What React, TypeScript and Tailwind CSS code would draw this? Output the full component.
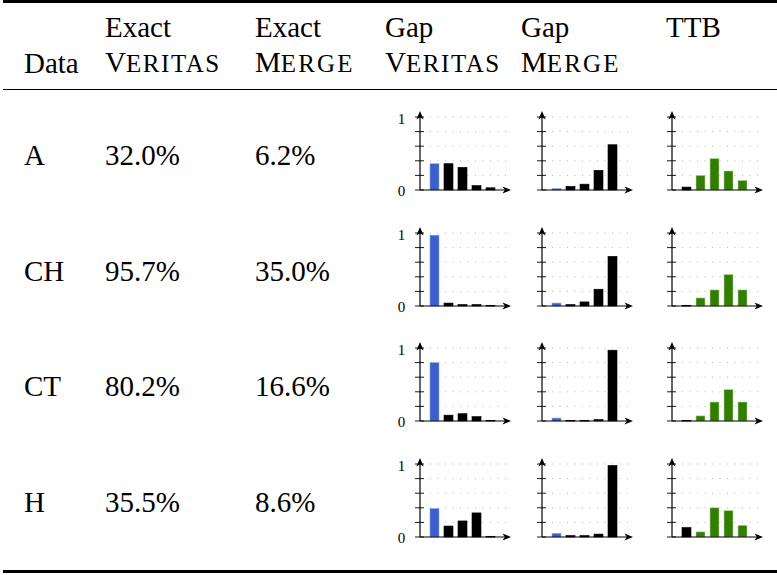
import React from 'react';

const BLUE = '#3a5fcd';
const GREEN = '#337d04';
const BLACK = '#000000';

interface Row {
  label: string;
  exactVeritas: string;
  exactMerge: string;
  gapVeritas: number[];
  gapMerge: number[];
  ttb: number[];
}

const rows: Row[] = [
  {
    label: 'A',
    exactVeritas: '32.0%',
    exactMerge: '6.2%',
    gapVeritas: [0.36, 0.36, 0.31, 0.06, 0.03],
    gapMerge: [0.02, 0.05, 0.08, 0.27, 0.62],
    ttb: [0.04, 0.2, 0.43, 0.26, 0.13],
  },
  {
    label: 'CH',
    exactVeritas: '95.7%',
    exactMerge: '35.0%',
    gapVeritas: [0.97, 0.04, 0.02, 0.02, 0.01],
    gapMerge: [0.04, 0.02, 0.056, 0.23, 0.68],
    ttb: [0.01, 0.11, 0.22, 0.43, 0.22],
  },
  {
    label: 'CT',
    exactVeritas: '80.2%',
    exactMerge: '16.6%',
    gapVeritas: [0.8, 0.08, 0.1, 0.06, 0.01],
    gapMerge: [0.04, 0.01, 0.01, 0.02, 0.97],
    ttb: [0.01, 0.07, 0.26, 0.43, 0.26],
  },
  {
    label: 'H',
    exactVeritas: '35.5%',
    exactMerge: '8.6%',
    gapVeritas: [0.39, 0.15, 0.22, 0.33, 0.01],
    gapMerge: [0.05, 0.02, 0.02, 0.04, 0.98],
    ttb: [0.13, 0.07, 0.4, 0.36, 0.16],
  },
];

const barEdge = (color: string) => (color === BLUE ? '#8fa6e8' : color === GREEN ? '#a9d98a' : BLACK);

// small bar plot with arrowed axes, dotted grid and optional 0/1 labels
function Chart({ values, colors, labels = false }: { values: number[]; colors: string[]; labels?: boolean }) {
  const ax = 6;
  const y0 = 83;
  const span = 73;
  const levels = [0.2, 0.4, 0.6, 0.8, 1];
  return (
    <svg
      width={labels ? 129 : 100}
      height={100}
      viewBox={labels ? '-29 0 129 100' : '0 0 100 100'}
      className="block"
    >
      {levels.map((l) => (
        <line
          key={`g${l}`}
          x1={ax + 10}
          x2={ax + 87}
          y1={y0 - l * span}
          y2={y0 - l * span}
          stroke="#b4b4b4"
          strokeWidth={1}
          strokeDasharray="1 6.5"
        />
      ))}
      {[0, ...levels].map((l) => (
        <line key={`t${l}`} x1={ax - 5} x2={ax + 4} y1={y0 - l * span} y2={y0 - l * span} stroke="#000" strokeWidth={0.9} />
      ))}
      {values.map((v, i) => (
        <rect
          key={i}
          x={ax + 10 + 14 * i}
          y={y0 - v * span}
          width={9}
          height={Math.max(v * span, 0.8)}
          fill={colors[i]}
          stroke={barEdge(colors[i])}
          strokeWidth={0.6}
        />
      ))}
      <line x1={ax} y1={y0} x2={ax} y2={9} stroke="#000" strokeWidth={1.2} />
      <line x1={ax} y1={y0} x2={92} y2={y0} stroke="#000" strokeWidth={1.2} />
      <path d={`M${ax} 4 L${ax + 3.6} 12.5 L${ax} 10.2 L${ax - 3.6} 12.5 Z`} fill="#000" />
      <path d={`M97 ${y0} L88.5 ${y0 - 3.6} L90.8 ${y0} L88.5 ${y0 + 3.6} Z`} fill="#000" />
      {labels && (
        <g fontFamily="'Liberation Serif', serif" fontSize={15} fill="#000">
          <text x={-12.5} y={17} textAnchor="middle">
            1
          </text>
          <text x={-12.5} y={88.5} textAnchor="middle">
            0
          </text>
        </g>
      )}
    </svg>
  );
}

const cols = 'grid grid-cols-[81px_150px_130px_136px_145px_1fr] pl-[24px]';

export default function App() {
  return (
    <div className="w-[777px] h-[575px] bg-white text-black font-['Liberation_Serif',serif] text-[29px] leading-[35px] overflow-hidden">
      <div className="ml-[3px] h-[2.5px] bg-black" />

      <div className={`${cols} pt-[7px] pb-[8px]`}>
        <div className="self-end">Data</div>
        <div>
          <div>Exact</div>
          <div>
            V<span className="text-[0.86em] tracking-[1.6px]">ERITAS</span>
          </div>
        </div>
        <div>
          <div>Exact</div>
          <div>
            M<span className="text-[0.86em] tracking-[2.2px]">ERGE</span>
          </div>
        </div>
        <div>
          <div>Gap</div>
          <div>
            V<span className="text-[0.86em] tracking-[1.6px]">ERITAS</span>
          </div>
        </div>
        <div>
          <div>Gap</div>
          <div>
            M<span className="text-[0.86em] tracking-[2.2px]">ERGE</span>
          </div>
        </div>
        <div className="self-start">TTB</div>
      </div>

      <div className="ml-[3px] h-[1.5px] bg-black" />

      {rows.map((r) => (
        <div key={r.label} className={`${cols} h-[115.5px] items-start`}>
          <div className="pt-[48px]">{r.label}</div>
          <div className="pt-[48px]">{r.exactVeritas}</div>
          <div className="pt-[48px]">{r.exactMerge}</div>
          <div className="pt-[17px]">
            <Chart values={r.gapVeritas} colors={[BLUE, BLACK, BLACK, BLACK, BLACK]} labels />
          </div>
          <div className="pt-[17px] pl-[15px]">
            <Chart values={r.gapMerge} colors={[BLUE, BLACK, BLACK, BLACK, BLACK]} />
          </div>
          <div className="pt-[17px]">
            <Chart values={r.ttb} colors={[BLACK, GREEN, GREEN, GREEN, GREEN]} />
          </div>
        </div>
      ))}

      <div className="h-[18px]" />
      <div className="ml-[3px] h-[2.5px] bg-black" />
    </div>
  );
}
